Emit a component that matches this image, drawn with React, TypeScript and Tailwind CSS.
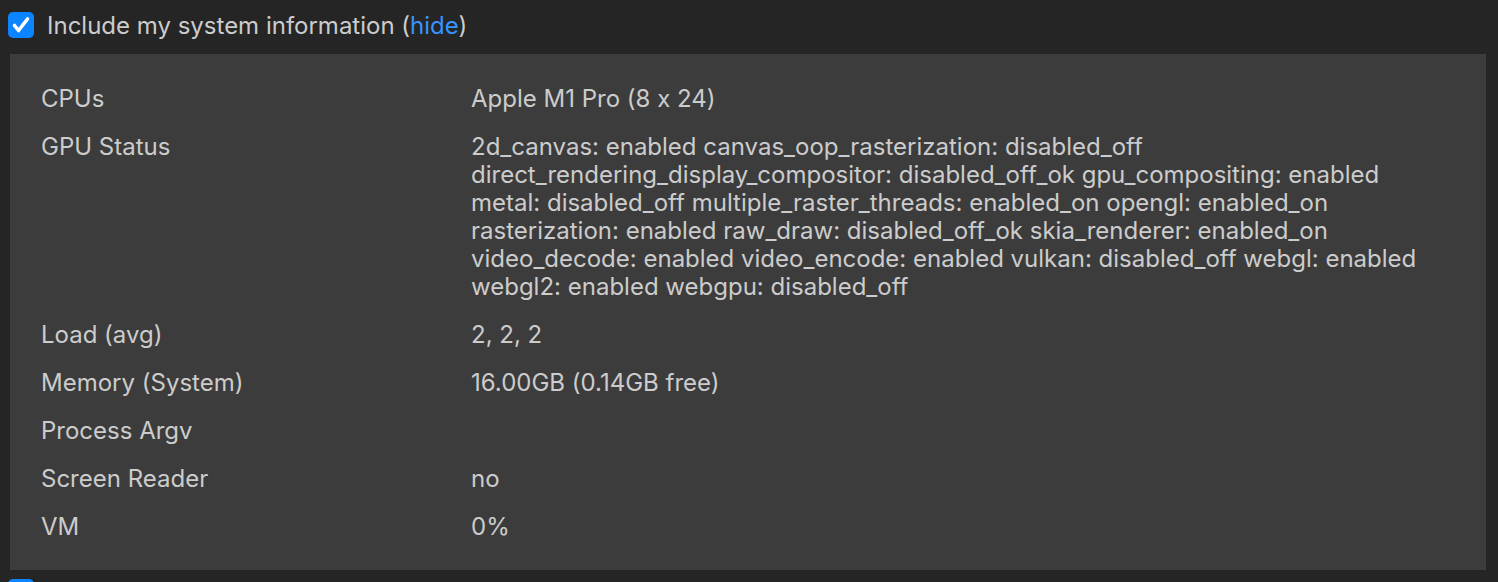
import React from "react";

const rows: { label: string; value: string[] }[] = [
  { label: "CPUs", value: ["Apple M1 Pro (8 x 24)"] },
  {
    label: "GPU Status",
    value: [
      "2d_canvas: enabled canvas_oop_rasterization: disabled_off",
      "direct_rendering_display_compositor: disabled_off_ok gpu_compositing: enabled",
      "metal: disabled_off multiple_raster_threads: enabled_on opengl: enabled_on",
      "rasterization: enabled raw_draw: disabled_off_ok skia_renderer: enabled_on",
      "video_decode: enabled video_encode: enabled vulkan: disabled_off webgl: enabled",
      "webgl2: enabled webgpu: disabled_off",
    ],
  },
  { label: "Load (avg)", value: ["2, 2, 2"] },
  { label: "Memory (System)", value: ["16.00GB (0.14GB free)"] },
  { label: "Process Argv", value: [""] },
  { label: "Screen Reader", value: ["no"] },
  { label: "VM", value: ["0%"] },
];

function Check() {
  return (
    <div className="w-[26px] h-[26px] rounded-[5px] bg-[#0a84ff] shrink-0">
      <svg width="26" height="26" viewBox="0 0 26 26">
        <path d="M6.5 13.5 L10.5 18.5 L19.5 7" fill="none" stroke="white" strokeWidth="3.6" strokeLinecap="round" strokeLinejoin="round" />
      </svg>
    </div>
  );
}

export default function App() {
  return (
    <div
      className="w-[1498px] h-[582px] overflow-hidden bg-[#252525] text-[#cccccc] text-[24px] leading-[28px]"
      style={{ fontFamily: "Inter, 'Noto Sans', sans-serif", fontFeatureSettings: "'calt' 0" }}
    >
      <div className="pl-[8px] pt-[12px] h-[38px] flex items-start gap-[13px]">
        <Check />
        <span className="mt-[0px]">
          Include my system information (<span className="text-[#3794ff]">hide</span>)
        </span>
      </div>
      <div className="ml-[10px] mr-[12px] mt-[16px] bg-[#3c3c3c] pl-[31px] pt-[21px] pb-[19px]">
        {rows.map((r) => (
          <div key={r.label} className="flex py-[10px]">
            <div className="w-[430px] shrink-0">{r.label}</div>
            <div className="flex flex-col">
              {r.value.map((v, i) => (
                <div key={i} className="min-h-[28px] whitespace-nowrap">{v}</div>
              ))}
            </div>
          </div>
        ))}
      </div>
      <div className="pl-[8px] mt-[9px]">
        <Check />
      </div>
    </div>
  );
}
